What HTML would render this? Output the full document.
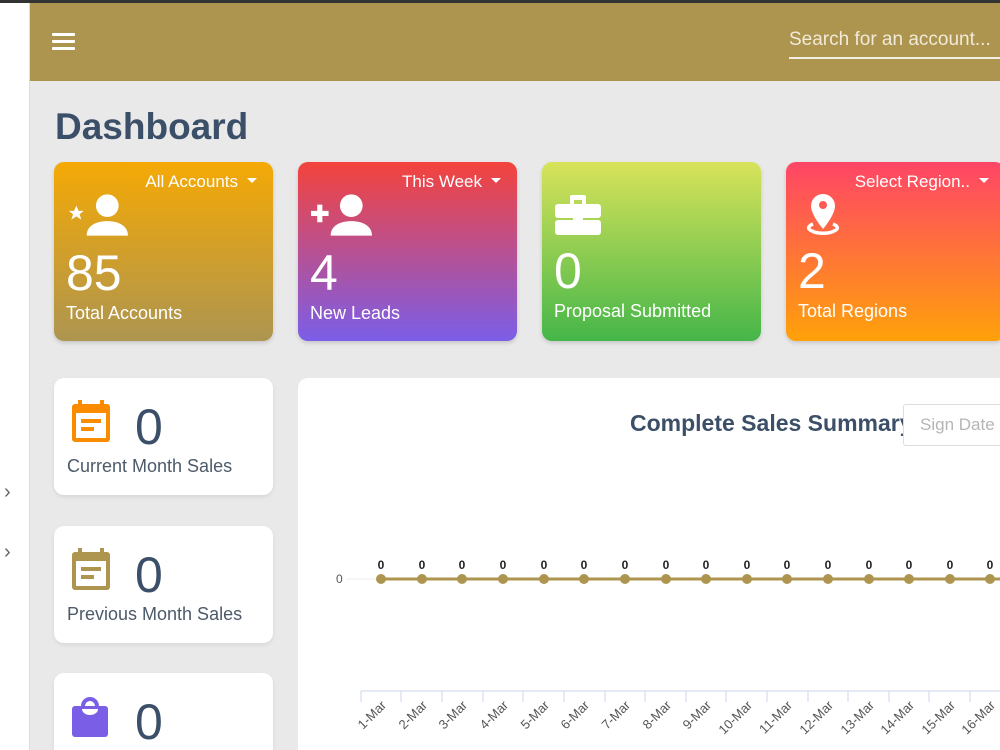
<!DOCTYPE html>
<html><head><meta charset="utf-8"><style>
*{box-sizing:border-box;margin:0;padding:0}
html{width:1000px;height:750px;overflow:hidden}
body{width:1000px;height:750px;overflow:hidden;background:#e9e9e9;font-family:"Liberation Sans",sans-serif;position:relative}
.side{position:absolute;left:0;top:0;width:30px;height:750px;background:#fff;border-right:1px solid #ddd}
.top{position:absolute;left:0;top:0;width:1000px;height:3px;background:#333}
.hdr{position:absolute;left:30px;top:3px;width:970px;height:78px;background:#ad9550}
.ham{position:absolute;left:22px;top:30px;width:23px}
.ham i{display:block;height:3px;background:#fff;margin-bottom:4px;border-radius:1px}
.search{position:absolute;left:759px;top:26px;width:211px;color:#f1ead8;font-size:19px;padding-bottom:6px;border-bottom:2px solid #f2efe6;white-space:nowrap;overflow:hidden}
h1{position:absolute;left:55px;top:106px;font-size:37px;color:#3b5068;font-weight:bold}
.card{position:absolute;top:162px;width:219px;height:179px;border-radius:10px;color:#fff;box-shadow:0 2px 4px rgba(0,0,0,.15);overflow:hidden}
.dd{position:absolute;right:16px;top:10px;font-size:17px}
.dd:after{content:"";display:inline-block;margin-left:9px;border:5px solid transparent;border-top-color:#fff;border-bottom:0;vertical-align:4px}
.num{position:absolute;left:12px;top:82px;font-size:50px}
.lbl{position:absolute;left:12px;top:141px;font-size:18px}
.ico{position:absolute;left:12px;top:30px}
.sm{position:absolute;left:54px;width:219px;height:117px;background:#fff;border-radius:10px;box-shadow:0 2px 4px rgba(0,0,0,.08);overflow:hidden}
.sm .n{position:absolute;left:81px;top:20px;font-size:50px;color:#3b5068}
.sm .t{position:absolute;left:13px;top:78px;font-size:18px;color:#4c5a69}
.sm svg{position:absolute;left:18px;top:22px}
.chart{position:absolute;left:298px;top:378px;width:702px;height:372px;background:#fff;border-radius:10px 0 0 0;overflow:hidden}
.ct{position:absolute;left:332px;top:32px;font-size:23px;font-weight:bold;color:#3b5068;white-space:nowrap}
.sd{position:absolute;left:605px;top:26px;width:120px;height:42px;border:1px solid #ddd;border-radius:3px;background:#fff;color:#b5b5b5;font-size:17px;padding:10px 16px}
.chev{position:absolute;left:4px;color:#666;font-size:20px}
</style></head><body>
<div class="side"></div>
<div class="chev" style="top:481px">&#8250;</div>
<div class="chev" style="top:541px">&#8250;</div>
<div class="top"></div>
<div class="hdr"><div class="ham"><i></i><i></i><i></i></div><div class="search">Search for an account...</div></div>
<h1>Dashboard</h1>

<div class="card" style="left:54px;background:linear-gradient(#f5a905,#ad9550)">
<div class="dd">All Accounts</div>
<svg class="ico" width="64" height="48" viewBox="0 0 62 46"><circle cx="40" cy="13" r="11" fill="#fff"/><path d="M20 42c0-10 10-14 20-14s20 4 20 14z" fill="#fff"/><path d="M10 13l2.2 5h5l-4 3.3 1.6 5.2L10 23.4 5.2 26.5l1.6-5.2-4-3.3h5z" fill="#fff"/></svg>
<div class="num">85</div><div class="lbl">Total Accounts</div></div>

<div class="card" style="left:298px;background:linear-gradient(#f4433c,#7b5ee8)">
<div class="dd">This Week</div>
<svg class="ico" width="64" height="48" viewBox="0 0 62 46"><circle cx="40" cy="13" r="11" fill="#fff"/><path d="M20 42c0-10 10-14 20-14s20 4 20 14z" fill="#fff"/><path d="M7 12h5v6h6v5h-6v6H7v-6H1v-5h6z" fill="#fff"/></svg>
<div class="num">4</div><div class="lbl">New Leads</div></div>

<div class="card" style="left:542px;background:linear-gradient(#d8e35a,#45b649)">
<svg class="ico" width="48" height="46" viewBox="0 0 48 46"><path d="M16 12V5a2 2 0 0 1 2-2h12a2 2 0 0 1 2 2v7h-4V8h-8v4z" fill="#fff"/><rect x="1" y="12" width="46" height="14" rx="3" fill="#fff"/><rect x="1" y="28" width="46" height="15" rx="3" fill="#fff"/><rect x="19" y="24" width="10" height="6" fill="#fff"/></svg>
<div class="num" style="top:80px">0</div><div class="lbl" style="top:139px">Proposal Submitted</div></div>

<div class="card" style="left:786px;background:linear-gradient(#ff4567,#ffa10a)">
<div class="dd">Select Region..</div>
<svg class="ico" width="50" height="48" viewBox="0 0 50 46"><path d="M25 1a12 12 0 0 0-12 12c0 9 12 23 12 23s12-14 12-23A12 12 0 0 0 25 1z" fill="#fff"/><circle cx="25" cy="12" r="4" fill="#ff5a56"/><path d="M15 31c-5 2-6 5-1 7 5 3 17 3 22 0 5-2 4-5-1-7" fill="none" stroke="#fff" stroke-width="3.5"/></svg>
<div class="num" style="top:80px">2</div><div class="lbl" style="top:139px">Total Regions</div></div>

<div class="sm" style="top:378px"><svg width="38" height="42" viewBox="0 0 38 42"><rect x="0" y="4" width="38" height="38" rx="3" fill="#fb8c00"/><rect x="6" y="0" width="4" height="8" fill="#fb8c00"/><rect x="28" y="0" width="4" height="8" fill="#fb8c00"/><rect x="4" y="13" width="30" height="25" fill="#fff"/><rect x="9" y="19" width="20" height="4" fill="#fb8c00"/><rect x="9" y="27" width="13" height="4" fill="#fb8c00"/></svg><div class="n">0</div><div class="t">Current Month Sales</div></div>
<div class="sm" style="top:526px"><svg width="38" height="42" viewBox="0 0 38 42"><rect x="0" y="4" width="38" height="38" rx="3" fill="#ad9550"/><rect x="6" y="0" width="4" height="8" fill="#ad9550"/><rect x="28" y="0" width="4" height="8" fill="#ad9550"/><rect x="4" y="13" width="30" height="25" fill="#fff"/><rect x="9" y="19" width="20" height="4" fill="#ad9550"/><rect x="9" y="27" width="13" height="4" fill="#ad9550"/></svg><div class="n">0</div><div class="t">Previous Month Sales</div></div>
<div class="sm" style="top:673px;height:77px;border-radius:10px 10px 0 0"><svg width="38" height="42" viewBox="0 0 38 42"><path d="M11 11a7 7 0 0 1 14 0" fill="none" stroke="#7a5fe6" stroke-width="4"/><rect x="0" y="11" width="36" height="31" rx="3" fill="#7a5fe6"/><path d="M10 14a8 6 0 0 0 16 0" fill="#fff"/></svg><div class="n">0</div></div>

<div class="chart"><div class="ct">Complete Sales Summary</div><div class="sd">Sign Date</div></div>

<svg style="position:absolute;left:0;top:0" width="1000" height="750">
<text x="336" y="583" font-size="12" fill="#555" font-family="Liberation Sans">0</text>
<line x1="346" y1="579" x2="1000" y2="579" stroke="#eee"/>
<line x1="381" y1="579" x2="1000" y2="579" stroke="#ad9550" stroke-width="3"/>
<g fill="#ad9550">
<circle cx="381" cy="579" r="5"/><circle cx="422" cy="579" r="5"/><circle cx="462" cy="579" r="5"/><circle cx="503" cy="579" r="5"/><circle cx="544" cy="579" r="5"/><circle cx="584" cy="579" r="5"/><circle cx="625" cy="579" r="5"/><circle cx="666" cy="579" r="5"/><circle cx="706" cy="579" r="5"/><circle cx="747" cy="579" r="5"/><circle cx="787" cy="579" r="5"/><circle cx="828" cy="579" r="5"/><circle cx="869" cy="579" r="5"/><circle cx="909" cy="579" r="5"/><circle cx="950" cy="579" r="5"/><circle cx="990" cy="579" r="5"/></g>
<g font-size="12" fill="#222" text-anchor="middle" font-family="Liberation Sans" font-weight="bold">
<text x="381" y="569">0</text><text x="422" y="569">0</text><text x="462" y="569">0</text><text x="503" y="569">0</text><text x="544" y="569">0</text><text x="584" y="569">0</text><text x="625" y="569">0</text><text x="666" y="569">0</text><text x="706" y="569">0</text><text x="747" y="569">0</text><text x="787" y="569">0</text><text x="828" y="569">0</text><text x="869" y="569">0</text><text x="909" y="569">0</text><text x="950" y="569">0</text><text x="990" y="569">0</text></g>
<line x1="361" y1="691" x2="1000" y2="691" stroke="#ccd6eb"/>
<g stroke="#ccd6eb">
<line x1="361" y1="691" x2="361" y2="702"/><line x1="401" y1="691" x2="401" y2="702"/><line x1="442" y1="691" x2="442" y2="702"/><line x1="483" y1="691" x2="483" y2="702"/><line x1="523" y1="691" x2="523" y2="702"/><line x1="564" y1="691" x2="564" y2="702"/><line x1="605" y1="691" x2="605" y2="702"/><line x1="645" y1="691" x2="645" y2="702"/><line x1="686" y1="691" x2="686" y2="702"/><line x1="726" y1="691" x2="726" y2="702"/><line x1="767" y1="691" x2="767" y2="702"/><line x1="808" y1="691" x2="808" y2="702"/><line x1="848" y1="691" x2="848" y2="702"/><line x1="889" y1="691" x2="889" y2="702"/><line x1="929" y1="691" x2="929" y2="702"/><line x1="970" y1="691" x2="970" y2="702"/></g>
<g font-size="13" fill="#555" text-anchor="end" font-family="Liberation Sans">
<text transform="translate(387,706) rotate(-45)">1-Mar</text><text transform="translate(428,706) rotate(-45)">2-Mar</text><text transform="translate(468,706) rotate(-45)">3-Mar</text><text transform="translate(509,706) rotate(-45)">4-Mar</text><text transform="translate(550,706) rotate(-45)">5-Mar</text><text transform="translate(590,706) rotate(-45)">6-Mar</text><text transform="translate(631,706) rotate(-45)">7-Mar</text><text transform="translate(672,706) rotate(-45)">8-Mar</text><text transform="translate(712,706) rotate(-45)">9-Mar</text><text transform="translate(753,706) rotate(-45)">10-Mar</text><text transform="translate(793,706) rotate(-45)">11-Mar</text><text transform="translate(834,706) rotate(-45)">12-Mar</text><text transform="translate(875,706) rotate(-45)">13-Mar</text><text transform="translate(915,706) rotate(-45)">14-Mar</text><text transform="translate(956,706) rotate(-45)">15-Mar</text><text transform="translate(996,706) rotate(-45)">16-Mar</text></g>
</svg>
</body></html>
